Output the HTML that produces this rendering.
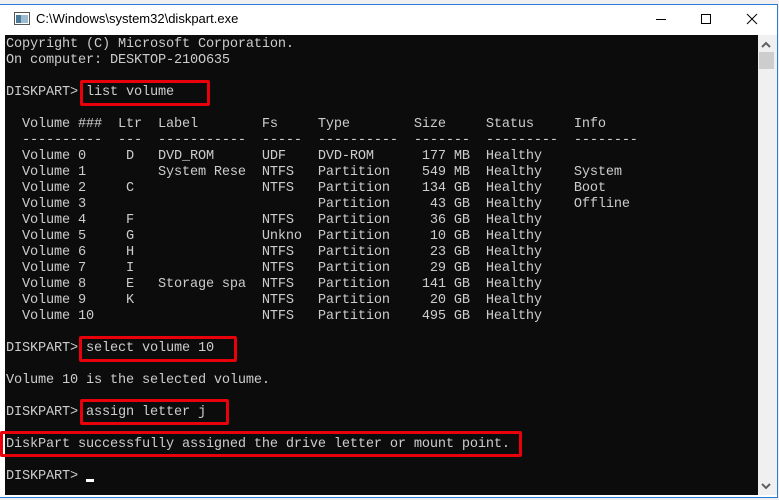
<!DOCTYPE html>
<html><head><style>
body{margin:0;width:779px;height:500px;background:#f0f0f0;position:relative;overflow:hidden}
.win{position:absolute;left:0;top:4px;width:777px;height:492px;border-top:1px solid #2b7bd6;border-right:1px solid #2b7bd6;border-bottom:1px solid #2b7bd6;background:#fff}
.title{position:absolute;left:36px;top:11px;font:13px "Liberation Sans",sans-serif;color:#000}
.con{position:absolute;left:5px;top:35px;width:753px;height:460px;background:#0c0c0c}
pre{margin:0;position:absolute;left:6px;top:37px;font:13.6px/16px "Liberation Mono",monospace;letter-spacing:-0.16px;color:#cccccc}
.sb{position:absolute;left:758px;top:35px;width:19px;height:460px;background:#f0f0f0}
.thumb{position:absolute;left:759px;top:52px;width:15px;height:17px;background:#cdcdcd}
.box{position:absolute;border:3px solid #e8000b;border-radius:2px;box-sizing:border-box}
</style></head><body>
<div class="win"></div>
<svg style="position:absolute;left:14px;top:12px" width="16" height="14"><rect x="0.5" y="0.5" width="15" height="12" fill="#fff" stroke="#555"/><rect x="2" y="3" width="5" height="8" fill="#4a7a9a"/><rect x="7" y="3" width="7" height="8" fill="#9cbad0"/></svg>
<div class="title">C:\Windows\system32\diskpart.exe</div>
<div style="position:absolute;left:656px;top:19px;width:10px;height:1px;background:#000"></div>
<div style="position:absolute;left:701px;top:14px;width:8px;height:8px;border:1px solid #000"></div>
<svg style="position:absolute;left:746px;top:13px" width="12" height="12"><path d="M1 1L11 11M11 1L1 11" stroke="#000" stroke-width="1"/></svg>
<div class="con"></div>
<div class="sb"></div><div class="thumb"></div>
<svg style="position:absolute;left:761px;top:41px" width="10" height="8"><path d="M1 6L5 2L9 6" stroke="#606060" stroke-width="2" fill="none"/></svg>
<svg style="position:absolute;left:761px;top:482px" width="10" height="8"><path d="M1 2L5 6L9 2" stroke="#606060" stroke-width="2" fill="none"/></svg>
<pre>Copyright (C) Microsoft Corporation.
On computer: DESKTOP-210O635

DISKPART> list volume

  Volume ###  Ltr  Label        Fs     Type        Size     Status     Info
  ----------  ---  -----------  -----  ----------  -------  ---------  --------
  Volume 0     D   DVD_ROM      UDF    DVD-ROM      177 MB  Healthy
  Volume 1         System Rese  NTFS   Partition    549 MB  Healthy    System
  Volume 2     C                NTFS   Partition    134 GB  Healthy    Boot
  Volume 3                             Partition     43 GB  Healthy    Offline
  Volume 4     F                NTFS   Partition     36 GB  Healthy
  Volume 5     G                Unkno  Partition     10 GB  Healthy
  Volume 6     H                NTFS   Partition     23 GB  Healthy
  Volume 7     I                NTFS   Partition     29 GB  Healthy
  Volume 8     E   Storage spa  NTFS   Partition    141 GB  Healthy
  Volume 9     K                NTFS   Partition     20 GB  Healthy
  Volume 10                     NTFS   Partition    495 GB  Healthy

DISKPART> select volume 10

Volume 10 is the selected volume.

DISKPART> assign letter j

DiskPart successfully assigned the drive letter or mount point.

DISKPART> </pre>
<div style="position:absolute;left:86px;top:479px;width:8px;height:3px;background:#fff"></div>
<div class="box" style="left:80px;top:80px;width:130px;height:26px"></div>
<div class="box" style="left:79px;top:336px;width:158px;height:26px"></div>
<div class="box" style="left:80px;top:399px;width:149px;height:26px"></div>
<div class="box" style="left:0px;top:431px;width:522px;height:26px"></div>
</body></html>
